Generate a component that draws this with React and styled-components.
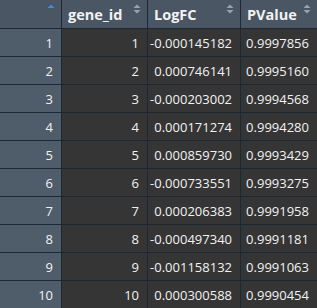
import React from 'react'
import styled, { createGlobalStyle } from 'styled-components'

const GlobalStyle = createGlobalStyle`
    html, body {
        margin: 0;
        padding: 0;
        background-color: #1c2833;
    }
`

const rows = [
    [1, '-0.000145182', '0.9997856'],
    [2, '0.000746141', '0.9995160'],
    [3, '-0.000203002', '0.9994568'],
    [4, '0.000171274', '0.9994280'],
    [5, '0.000859730', '0.9993429'],
    [6, '-0.000733551', '0.9993275'],
    [7, '0.000206383', '0.9991958'],
    [8, '-0.000497340', '0.9991181'],
    [9, '-0.001158132', '0.9991063'],
    [10, '0.000300588', '0.9990454'],
]

const Grid = styled.div`
    display: grid;
    grid-template-columns: 61px 85px 92px 76px;
    grid-template-rows: 28px;
    grid-auto-rows: 27px;
    gap: 1px;
    width: 317px;
    height: 308px;
    background-color: #1c2833;
    font-family: "Open Sans", "Noto Sans", sans-serif;
    font-size: 13px;
    color: #f2f2f2;
`

const HeaderCell = styled.div`
    display: flex;
    align-items: center;
    justify-content: space-between;
    padding: 0 6px 0 6px;
    background-color: #4a5663;
    font-size: 14.5px;
    font-weight: 700;

    svg {
        align-self: flex-start;
        margin-top: 4px;
    }
`

const Cell = styled.div`
    display: flex;
    align-items: center;
    justify-content: flex-end;
    padding-right: 8px;
    background-color: ${p => (p.$index ? '#4f5c6a' : '#353535')};
`

const SortIcon = ({ active }) => (
    <svg width="8" height="10" viewBox="0 0 8 10">
        <path d="M4 0.5 L7.5 4 L0.5 4 Z" fill={active ? '#3d8fdb' : '#9aa3ad'} />
        {!active && <path d="M4 9.5 L7.5 6 L0.5 6 Z" fill="#9aa3ad" />}
    </svg>
)

export default function App() {
    return (
        <>
            <GlobalStyle />
            <Grid>
                <HeaderCell>
                    <span />
                    <SortIcon active />
                </HeaderCell>
                <HeaderCell>
                    <span>gene_id</span>
                    <SortIcon />
                </HeaderCell>
                <HeaderCell>
                    <span>LogFC</span>
                    <SortIcon />
                </HeaderCell>
                <HeaderCell>
                    <span>PValue</span>
                    <SortIcon />
                </HeaderCell>
                {rows.map(([id, fc, p]) => (
                    <React.Fragment key={id}>
                        <Cell $index>{id}</Cell>
                        <Cell>{id}</Cell>
                        <Cell>{fc}</Cell>
                        <Cell>{p}</Cell>
                    </React.Fragment>
                ))}
            </Grid>
        </>
    )
}
